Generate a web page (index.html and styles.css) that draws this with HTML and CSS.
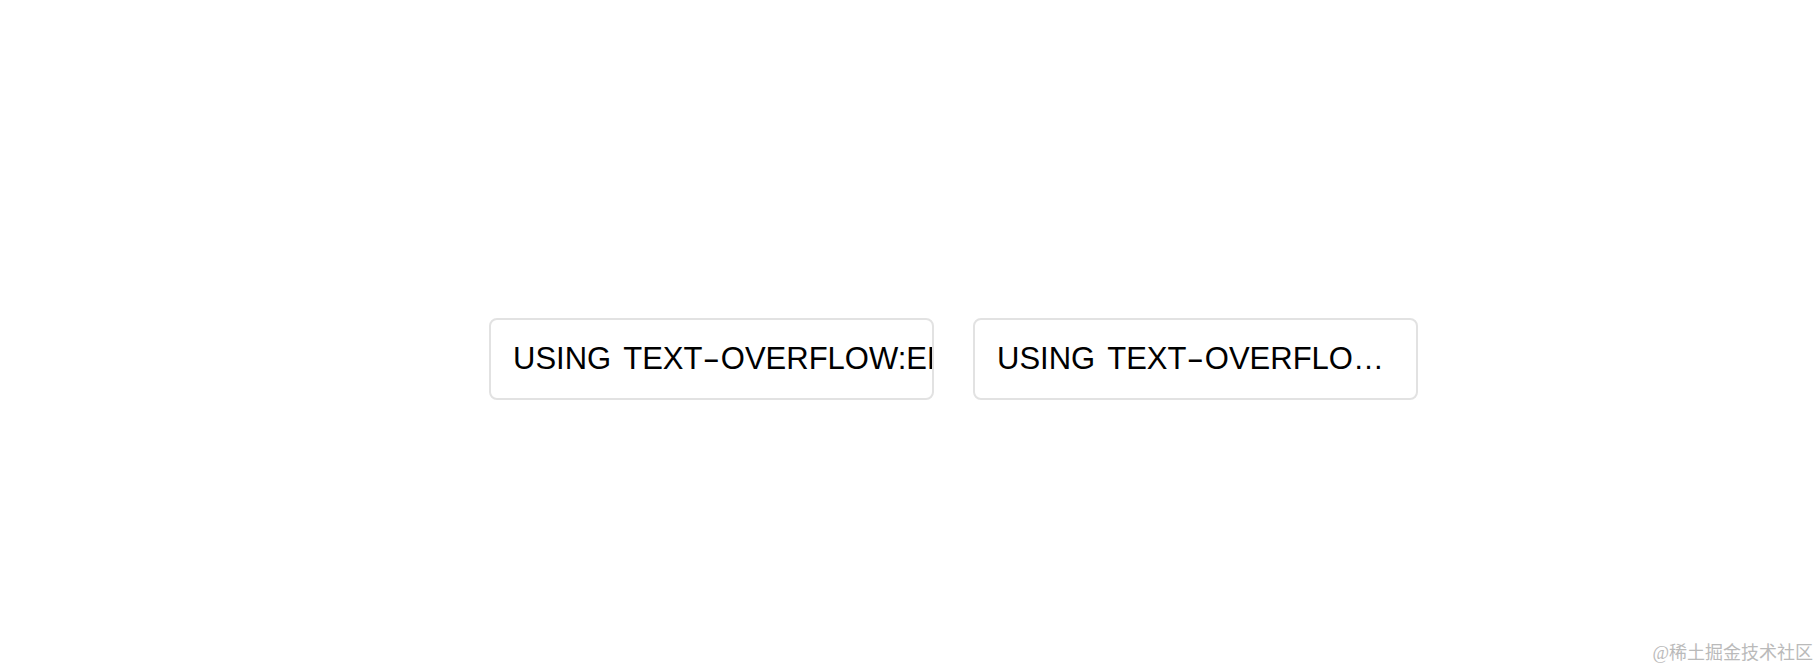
FILE: index.html
```html
<!DOCTYPE html>
<html lang="en">
<head>
  <meta charset="UTF-8">
  <meta name="viewport" content="width=device-width, initial-scale=1.0">
  <title>text-overflow demo</title>
  <link rel="stylesheet" href="styles.css">
</head>
<body>
  <div class="demo">
    <div class="box clip">Using text<span class="dash">-</span>overflow:ellipsis and overflow:hidden</div>
    <div class="box ellipsis">Using text<span class="dash">-</span>overflow:ellipsis and overflow:hidden</div>
  </div>
  <div class="watermark">@稀土掘金技术社区</div>
</body>
</html>
```

FILE: styles.css
```css
body {
  margin: 0;
  height: 670px;
  background: #fff;
  font-family: 'Liberation Sans', Arial, sans-serif;
  color: #000;
  position: relative;
  overflow: hidden;
}
.demo {
  display: flex;
  gap: 39px;
  padding: 318px 0 0 489px;
}
.box {
  box-sizing: border-box;
  width: 445px;
  height: 82px;
  padding: 0 22px;
  border: 2px solid #e2e2e2;
  border-radius: 8px;
  font-size: 31px;
  line-height: 78px;
  word-spacing: 4px;
  text-transform: uppercase;
  white-space: nowrap;
  overflow: hidden;
}
.ellipsis { text-overflow: ellipsis; }
/* wider dash, like the system font draws it */
.dash {
  display: inline-block;
  transform: scaleX(1.7);
  margin: 0 4px;
}
.watermark {
  position: absolute;
  right: 7px;
  bottom: 6px;
  font-size: 18px;
  color: #bababa;
  font-family: 'Liberation Serif', 'Noto Sans CJK SC', serif;
}
```
